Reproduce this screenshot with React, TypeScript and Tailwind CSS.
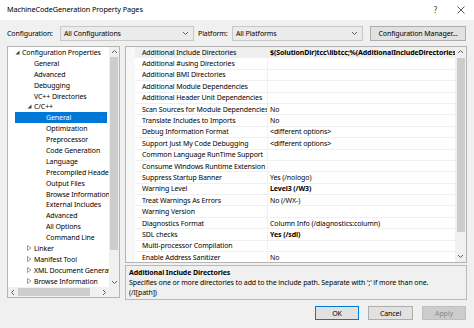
import React from 'react';

type Prop = { name: string; value?: string; bold?: boolean };

const props: Prop[] = [
  { name: 'Additional Include Directories', value: '$(SolutionDir)tcc\\libtcc;%(AdditionalIncludeDirectories)', bold: true },
  { name: 'Additional #using Directories' },
  { name: 'Additional BMI Directories' },
  { name: 'Additional Module Dependencies' },
  { name: 'Additional Header Unit Dependencies' },
  { name: 'Scan Sources for Module Dependencies', value: 'No' },
  { name: 'Translate Includes to Imports', value: 'No' },
  { name: 'Debug Information Format', value: '<different options>' },
  { name: 'Support Just My Code Debugging', value: '<different options>' },
  { name: 'Common Language RunTime Support' },
  { name: 'Consume Windows Runtime Extension' },
  { name: 'Suppress Startup Banner', value: 'Yes (/nologo)' },
  { name: 'Warning Level', value: 'Level3 (/W3)', bold: true },
  { name: 'Treat Warnings As Errors', value: 'No (/WX-)' },
  { name: 'Warning Version' },
  { name: 'Diagnostics Format', value: 'Column Info (/diagnostics:column)' },
  { name: 'SDL checks', value: 'Yes (/sdl)', bold: true },
  { name: 'Multi-processor Compilation' },
  { name: 'Enable Address Sanitizer', value: 'No' },
];

type Node = { label: string; level: number; mark?: 'open' | 'closed'; selected?: boolean };

const tree: Node[] = [
  { label: 'Configuration Properties', level: 0, mark: 'open' },
  { label: 'General', level: 1 },
  { label: 'Advanced', level: 1 },
  { label: 'Debugging', level: 1 },
  { label: 'VC++ Directories', level: 1 },
  { label: 'C/C++', level: 1, mark: 'open' },
  { label: 'General', level: 2, selected: true },
  { label: 'Optimization', level: 2 },
  { label: 'Preprocessor', level: 2 },
  { label: 'Code Generation', level: 2 },
  { label: 'Language', level: 2 },
  { label: 'Precompiled Headers', level: 2 },
  { label: 'Output Files', level: 2 },
  { label: 'Browse Information', level: 2 },
  { label: 'External Includes', level: 2 },
  { label: 'Advanced', level: 2 },
  { label: 'All Options', level: 2 },
  { label: 'Command Line', level: 2 },
  { label: 'Linker', level: 1, mark: 'closed' },
  { label: 'Manifest Tool', level: 1, mark: 'closed' },
  { label: 'XML Document Generator', level: 1, mark: 'closed' },
  { label: 'Browse Information', level: 1, mark: 'closed' },
];

function Chevron({ dir }: { dir: 'up' | 'down' | 'left' | 'right' }) {
  const d = {
    up: 'M1 4 L3.5 1.5 L6 4',
    down: 'M1 2 L3.5 4.5 L6 2',
    left: 'M4 1 L1.5 3.5 L4 6',
    right: 'M2 1 L4.5 3.5 L2 6',
  }[dir];
  return (
    <svg width="7" height="7" viewBox="0 0 7 7">
      <path d={d} fill="none" stroke="#606060" strokeWidth="1" />
    </svg>
  );
}

function Caret({ mark }: { mark: 'open' | 'closed' }) {
  if (mark === 'open') {
    return (
      <svg width="5" height="5" viewBox="0 0 5 5">
        <polygon points="4.5,0.5 4.5,4.5 0.5,4.5" fill="#404040" />
      </svg>
    );
  }
  return (
    <svg width="5" height="6" viewBox="0 0 5 6">
      <polygon points="0.5,0.5 4,3 0.5,5.5" fill="none" stroke="#808080" strokeWidth="0.8" />
    </svg>
  );
}

function Dropdown({ text, width }: { text: string; width: string }) {
  return (
    <div className={`${width} h-[15px] flex items-center justify-between pl-[3px] pr-[4px] bg-[#ebebeb] border border-[#c8c8c8]`}>
      <span>{text}</span>
      <Chevron dir="down" />
    </div>
  );
}

export default function App() {
  return (
    <div className="w-[474px] h-[328px] bg-[#f0f0f0] text-[7px] tracking-[-0.1px] text-black font-['Noto_Sans',sans-serif] leading-none overflow-hidden">
      {/* title bar */}
      <div className="h-[20px] bg-white flex items-center justify-between pl-[7px] pr-[9px]">
        <span className="text-[7.3px]">MachineCodeGeneration Property Pages</span>
        <div className="flex items-center gap-[20px]">
          <span className="text-[8px] text-[#333]">?</span>
          <svg width="8" height="8" viewBox="0 0 8 8">
            <path d="M0.5 0.5 L7.5 7.5 M7.5 0.5 L0.5 7.5" stroke="#333" strokeWidth="0.8" />
          </svg>
        </div>
      </div>

      {/* configuration row */}
      <div className="flex items-center h-[16px] mt-[5px] pl-[7px]">
        <span className="w-[53px]">Configuration:</span>
        <Dropdown text="All Configurations" width="w-[134px]" />
        <span className="w-[38px] pl-[4px]">Platform:</span>
        <Dropdown text="All Platforms" width="w-[131px]" />
        <div className="ml-[7px] w-[96px] h-[15px] flex items-center justify-center bg-[#e1e1e1] border border-[#adadad]">
          Configuration Manager...
        </div>
      </div>

      {/* main area */}
      <div className="flex mt-[5px] pl-[7px] gap-[5px]">
        {/* tree */}
        <div className="w-[113px] h-[252px] bg-white border border-[#b4b4b4] flex flex-col">
          <div className="flex flex-1 min-h-0">
            <div className="flex-1 overflow-hidden whitespace-nowrap pl-[7px] pr-[2px]">
              {tree.map((n, i) => (
                <div
                  key={i}
                  className="h-[10.9px] flex items-center"
                  style={{ paddingLeft: n.level * 12 }}
                >
                  <div className="w-[7px] flex items-center justify-start shrink-0">
                    {n.mark && <Caret mark={n.mark} />}
                  </div>
                  {n.selected ? (
                    <span className="flex-1 h-full flex items-center bg-[#0078d7] text-white -ml-[31px] pl-[31px]">
                      {n.label}
                    </span>
                  ) : (
                    <span>{n.label}</span>
                  )}
                </div>
              ))}
            </div>
            <div className="w-[10px] bg-[#f0f0f0] flex flex-col items-center">
              <div className="h-[10px] flex items-center"><Chevron dir="up" /></div>
              <div className="w-[8px] h-[193px] bg-[#cdcdcd]" />
              <div className="flex-1" />
              <div className="h-[10px] flex items-center"><Chevron dir="down" /></div>
            </div>
          </div>
          <div className="h-[10px] flex bg-[#f0f0f0]">
            <div className="w-[10px] flex items-center justify-center"><Chevron dir="left" /></div>
            <div className="w-[72px] h-[8px] my-[1px] bg-[#cdcdcd]" />
            <div className="flex-1" />
            <div className="w-[10px] flex items-center justify-center"><Chevron dir="right" /></div>
            <div className="w-[10px] bg-[#f0f0f0]" />
          </div>
        </div>

        {/* right column */}
        <div className="w-[342px] flex flex-col">
          <div className="h-[217px] bg-white border border-[#b4b4b4] flex">
            <div className="w-[9px] bg-[#f7f7f7]" />
            <div className="flex-1 overflow-hidden whitespace-nowrap">
              {props.map((p, i) => (
                <div
                  key={i}
                  className={`h-[11.4px] flex border-b border-[#f0f0f0] ${i === 0 ? 'bg-[#efefef]' : ''}`}
                >
                  <div className="w-[133px] shrink-0 pl-[7px] flex items-center border-r border-[#f0f0f0] overflow-hidden">
                    {p.name}
                  </div>
                  <div className={`pl-[2px] flex items-center ${p.bold ? 'font-bold' : ''}`}>
                    {p.value ?? ''}
                  </div>
                </div>
              ))}
            </div>
            <div className="w-[11px] bg-[#f0f0f0] flex flex-col items-center">
              <div className="h-[11px] flex items-center"><Chevron dir="up" /></div>
              <div className="w-[8px] h-[174px] bg-[#cdcdcd]" />
              <div className="flex-1" />
              <div className="h-[11px] flex items-center"><Chevron dir="down" /></div>
            </div>
          </div>

          <div className="mt-[2px] h-[35px] border border-[#b9b9b9] bg-[#f0f0f0] px-[3px] pt-[3px] flex flex-col gap-[3px]">
            <span className="font-bold">Additional Include Directories</span>
            <span>Specifies one or more directories to add to the include path. Separate with ';' if more than one.</span>
            <span>(/I[path])</span>
          </div>
        </div>
      </div>

      {/* buttons */}
      <div className="flex justify-end gap-[9px] pr-[8px] mt-[6px]">
        <div className="w-[44px] h-[14px] flex items-center justify-center bg-[#e1e1e1] border border-[#0078d7]">OK</div>
        <div className="w-[45px] h-[14px] flex items-center justify-center bg-[#e1e1e1] border border-[#adadad]">Cancel</div>
        <div className="w-[44px] h-[14px] flex items-center justify-center bg-[#cccccc] border border-[#bfbfbf] text-[#8a8a8a]">Apply</div>
      </div>
    </div>
  );
}
